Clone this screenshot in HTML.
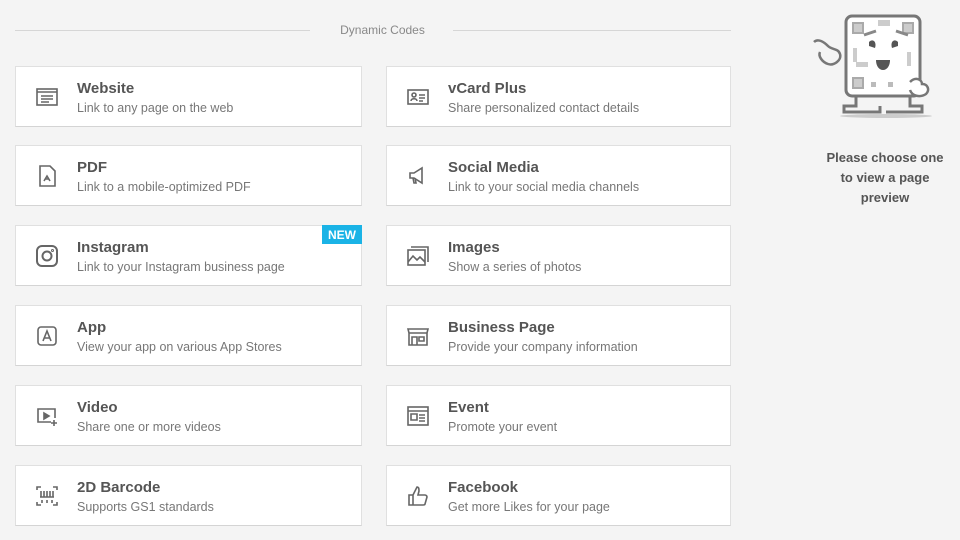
<!DOCTYPE html>
<html><head><meta charset="utf-8"><style>
*{margin:0;padding:0;box-sizing:border-box}
body{width:960px;height:540px;background:#f4f4f4;font-family:"Liberation Sans",sans-serif;position:relative;overflow:hidden}
.hdr{position:absolute;top:23px;left:0;width:745px;font-size:12px;color:#888;text-align:center}
.line{position:absolute;top:30px;height:1px;background:#d6d6d6}
.card{position:absolute;width:347px;height:61px;background:#fff;border:1px solid #e0e0e0;border-bottom-color:#d4d4d4}
.card.r{left:386px;width:345px}
.card.l{left:15px}
.t{position:absolute;left:61px;top:13px;font-size:15px;font-weight:bold;color:#555}
.s{position:absolute;left:61px;top:34px;font-size:12.5px;color:#777}
.card svg{position:absolute;left:20px;top:19px;width:22px;height:22px;fill:none;stroke:#666;stroke-width:1.6}
.new{position:absolute;right:-1px;top:-1px;background:#1ab3e6;color:#fff;font-size:12px;font-weight:bold;padding:3px 6px 2px}
.msg{position:absolute;left:812px;top:148px;width:146px;text-align:center;font-size:13px;font-weight:bold;color:#555;line-height:20px}
</style></head><body>
<div class="line" style="left:15px;width:295px"></div>
<div class="line" style="left:453px;width:278px"></div>
<div class="hdr" style="left:0;width:765px">Dynamic Codes</div>

<div class="card l" style="top:66px"><svg viewBox="0 0 22 22"><rect x="1" y="3" width="20" height="16"/><path d="M1 6h20M5 10h12M5 13h12M5 16h8"/></svg><div class="t">Website</div><div class="s">Link to any page on the web</div></div>
<div class="card r" style="top:66px"><svg viewBox="0 0 22 22"><rect x="1" y="4" width="20" height="14"/><circle cx="7" cy="9" r="2"/><path d="M4 15c0-3 6-3 6 0M12 9h6M12 12h6M12 15h4"/></svg><div class="t">vCard Plus</div><div class="s">Share personalized contact details</div></div>

<div class="card l" style="top:145px"><svg viewBox="0 0 22 22"><path d="M4 1h10l5 5v15H4z"/><path d="M8 16l3-5 3 5M9 14h4"/></svg><div class="t">PDF</div><div class="s">Link to a mobile-optimized PDF</div></div>
<div class="card r" style="top:145px"><svg viewBox="0 0 22 22"><path d="M3 8h4l8-5v15l-8-5H3zM6 13l1 5h2l-1-5"/></svg><div class="t">Social Media</div><div class="s">Link to your social media channels</div></div>

<div class="card l" style="top:225px"><svg viewBox="0 0 22 22" style="stroke-width:2"><rect x="1" y="1" width="20" height="20" rx="5"/><circle cx="11" cy="11" r="4.5"/><circle cx="16.5" cy="5.5" r=".5"/></svg><div class="t">Instagram</div><div class="s">Link to your Instagram business page</div><div class="new">NEW</div></div>
<div class="card r" style="top:225px"><svg viewBox="0 0 22 22"><rect x="1" y="5" width="17" height="15"/><path d="M4 2h17v15M1 17l5-6 4 4 3-3 5 5"/></svg><div class="t">Images</div><div class="s">Show a series of photos</div></div>

<div class="card l" style="top:305px"><svg viewBox="0 0 22 22"><rect x="2" y="2" width="18" height="18" rx="3"/><path d="M7 16l4-10 4 10M8.5 13h5"/></svg><div class="t">App</div><div class="s">View your app on various App Stores</div></div>
<div class="card r" style="top:305px"><svg viewBox="0 0 22 22"><path d="M1 4h20l-1 4H2zM2 8v12h18V8M5 20v-8h5v8M12 12h5v4h-5z"/></svg><div class="t">Business Page</div><div class="s">Provide your company information</div></div>

<div class="card l" style="top:385px"><svg viewBox="0 0 22 22"><path d="M15 17H2V4h17v9"/><path d="M8 8l5 3-5 3z" fill="#666"/><path d="M18 15v6M15 18h6"/></svg><div class="t">Video</div><div class="s">Share one or more videos</div></div>
<div class="card r" style="top:385px"><svg viewBox="0 0 22 22"><rect x="1" y="2" width="20" height="18"/><path d="M1 6h20M4 9h6v6H4zM12 10h6M12 13h6M12 16h6"/></svg><div class="t">Event</div><div class="s">Promote your event</div></div>

<div class="card l" style="top:465px"><svg viewBox="0 0 22 22"><path d="M1 5V2h4M17 2h4v3M1 17v3h4M17 20h4v-3M5 6v6M8 6v6M11 6v6M14 6v6M17 6v6M4 12h14M6 15v3M11 15v3M16 15v3"/></svg><div class="t">2D Barcode</div><div class="s">Supports GS1 standards</div></div>
<div class="card r" style="top:465px"><svg viewBox="0 0 22 22"><path d="M2 10h4v10H2zM6 10l4-8c2 0 2 2 2 4l-1 4h7c1 0 2 1 2 2l-2 7c0 1-1 1-2 1H6"/></svg><div class="t">Facebook</div><div class="s">Get more Likes for your page</div></div>

<svg style="position:absolute;left:806px;top:12px" width="130" height="106" viewBox="0 0 130 106" fill="none" stroke="#777" stroke-width="3">
<ellipse cx="80" cy="104" rx="46" ry="2" fill="#ccc" stroke="none"/>
<rect x="40" y="4" width="74" height="80" rx="6" fill="#fff"/>
<rect x="47" y="11" width="10" height="10" fill="#ccc" stroke="#aaa" stroke-width="2"/>
<rect x="97" y="11" width="10" height="10" fill="#ccc" stroke="#aaa" stroke-width="2"/>
<rect x="47" y="66" width="10" height="10" fill="#ccc" stroke="#aaa" stroke-width="2"/>
<rect x="72" y="8" width="12" height="6" fill="#ccc" stroke="none"/>
<rect x="47" y="36" width="4" height="14" fill="#ccc" stroke="none"/>
<rect x="101" y="40" width="4" height="14" fill="#ccc" stroke="none"/>
<rect x="50" y="50" width="12" height="5" fill="#ccc" stroke="none"/>
<path d="M58 23l12-4M90 19l12 4" stroke="#888"/>
<path d="M63 30c4-4 8 0 6 6l-6-2zM92 30c-4-4-8 0-6 6l6-2z" fill="#555" stroke="none"/>
<path d="M70 48h14c0 6-3 10-7 10s-7-4-7-10z" fill="#555" stroke="none"/>
<rect x="65" y="70" width="5" height="5" fill="#bbb" stroke="none"/><rect x="82" y="70" width="5" height="5" fill="#bbb" stroke="none"/>
<path d="M50 84v10h-12v6h36v-6M104 84v10h12v6H80"/>
<path d="M8 30c4-4 10 0 14 4s10 2 12 8-6 12-12 10-10-8-8-12" stroke-width="2.5"/>
<path d="M104 70c6-6 12-2 12 2 6 0 8 6 4 10-6 4-14 2-16-4" fill="#fff" stroke-width="2.5"/>
</svg>
<div class="msg">Please choose one<br>to view a page<br>preview</div>
</body></html>
